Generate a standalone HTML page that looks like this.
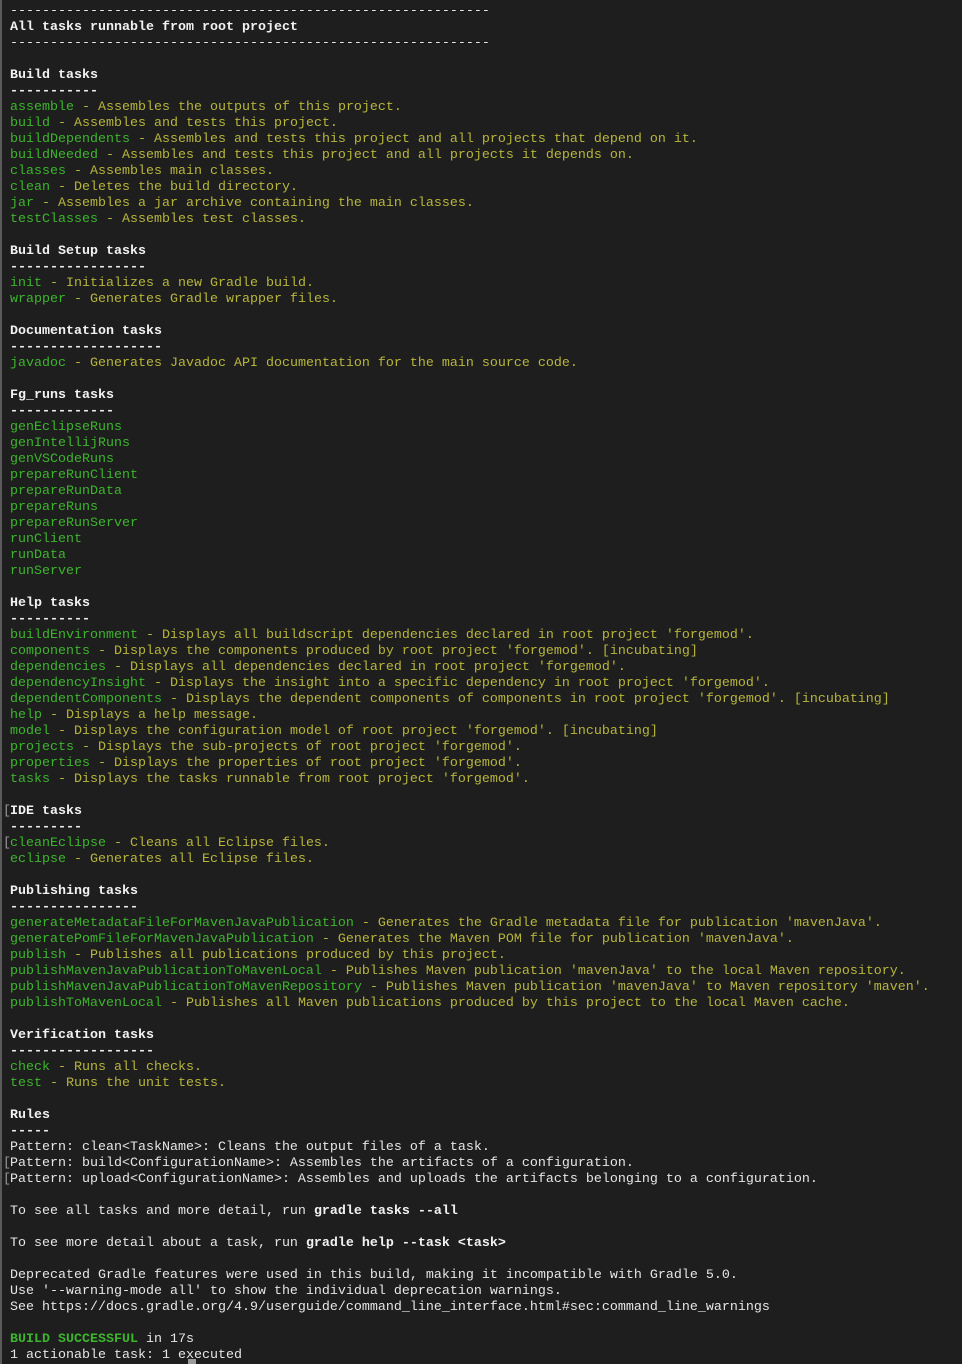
<!DOCTYPE html>
<html><head><meta charset="utf-8"><style>
html,body{margin:0;padding:0;background:#1e1e1e;width:962px;height:1364px;overflow:hidden;}
body{border-left:2px solid #5a5a5a;box-sizing:border-box;position:relative;}
pre{margin:0;padding:4px 0 0 8px;font-family:"Liberation Mono",monospace;font-size:13.33px;line-height:16px;color:#e6e6e6;white-space:pre;}
b{font-weight:bold;color:#f2f2f2}
.g{color:#3cb52c}
.y{color:#b7b53a}
.gb{color:#3cb52c;font-weight:bold}
.br{position:absolute;left:1px;color:#9a9a9a;font-family:"Liberation Mono",monospace;font-size:13.33px;line-height:16px}
.cur{position:absolute;left:186px;top:1359px;width:8px;height:5px;background:#9a9a9a}
</style></head><body>
<div class="br" style="top:804px">[</div>
<div class="br" style="top:836px">[</div>
<div class="br" style="top:1156px">[</div>
<div class="br" style="top:1172px">[</div>
<div class="cur"></div>
<pre>------------------------------------------------------------
<b>All tasks runnable from root project</b>
------------------------------------------------------------

<b>Build tasks</b>
<b>-----------</b>
<span class="g">assemble</span><span class="y"> - Assembles the outputs of this project.</span>
<span class="g">build</span><span class="y"> - Assembles and tests this project.</span>
<span class="g">buildDependents</span><span class="y"> - Assembles and tests this project and all projects that depend on it.</span>
<span class="g">buildNeeded</span><span class="y"> - Assembles and tests this project and all projects it depends on.</span>
<span class="g">classes</span><span class="y"> - Assembles main classes.</span>
<span class="g">clean</span><span class="y"> - Deletes the build directory.</span>
<span class="g">jar</span><span class="y"> - Assembles a jar archive containing the main classes.</span>
<span class="g">testClasses</span><span class="y"> - Assembles test classes.</span>

<b>Build Setup tasks</b>
<b>-----------------</b>
<span class="g">init</span><span class="y"> - Initializes a new Gradle build.</span>
<span class="g">wrapper</span><span class="y"> - Generates Gradle wrapper files.</span>

<b>Documentation tasks</b>
<b>-------------------</b>
<span class="g">javadoc</span><span class="y"> - Generates Javadoc API documentation for the main source code.</span>

<b>Fg_runs tasks</b>
<b>-------------</b>
<span class="g">genEclipseRuns
genIntellijRuns
genVSCodeRuns
prepareRunClient
prepareRunData
prepareRuns
prepareRunServer
runClient
runData
runServer</span>

<b>Help tasks</b>
<b>----------</b>
<span class="g">buildEnvironment</span><span class="y"> - Displays all buildscript dependencies declared in root project 'forgemod'.</span>
<span class="g">components</span><span class="y"> - Displays the components produced by root project 'forgemod'. [incubating]</span>
<span class="g">dependencies</span><span class="y"> - Displays all dependencies declared in root project 'forgemod'.</span>
<span class="g">dependencyInsight</span><span class="y"> - Displays the insight into a specific dependency in root project 'forgemod'.</span>
<span class="g">dependentComponents</span><span class="y"> - Displays the dependent components of components in root project 'forgemod'. [incubating]</span>
<span class="g">help</span><span class="y"> - Displays a help message.</span>
<span class="g">model</span><span class="y"> - Displays the configuration model of root project 'forgemod'. [incubating]</span>
<span class="g">projects</span><span class="y"> - Displays the sub-projects of root project 'forgemod'.</span>
<span class="g">properties</span><span class="y"> - Displays the properties of root project 'forgemod'.</span>
<span class="g">tasks</span><span class="y"> - Displays the tasks runnable from root project 'forgemod'.</span>

<b>IDE tasks</b>
<b>---------</b>
<span class="g">cleanEclipse</span><span class="y"> - Cleans all Eclipse files.</span>
<span class="g">eclipse</span><span class="y"> - Generates all Eclipse files.</span>

<b>Publishing tasks</b>
<b>----------------</b>
<span class="g">generateMetadataFileForMavenJavaPublication</span><span class="y"> - Generates the Gradle metadata file for publication 'mavenJava'.</span>
<span class="g">generatePomFileForMavenJavaPublication</span><span class="y"> - Generates the Maven POM file for publication 'mavenJava'.</span>
<span class="g">publish</span><span class="y"> - Publishes all publications produced by this project.</span>
<span class="g">publishMavenJavaPublicationToMavenLocal</span><span class="y"> - Publishes Maven publication 'mavenJava' to the local Maven repository.</span>
<span class="g">publishMavenJavaPublicationToMavenRepository</span><span class="y"> - Publishes Maven publication 'mavenJava' to Maven repository 'maven'.</span>
<span class="g">publishToMavenLocal</span><span class="y"> - Publishes all Maven publications produced by this project to the local Maven cache.</span>

<b>Verification tasks</b>
<b>------------------</b>
<span class="g">check</span><span class="y"> - Runs all checks.</span>
<span class="g">test</span><span class="y"> - Runs the unit tests.</span>

<b>Rules</b>
<b>-----</b>
Pattern: clean&lt;TaskName&gt;: Cleans the output files of a task.
Pattern: build&lt;ConfigurationName&gt;: Assembles the artifacts of a configuration.
Pattern: upload&lt;ConfigurationName&gt;: Assembles and uploads the artifacts belonging to a configuration.

To see all tasks and more detail, run <b>gradle tasks --all</b>

To see more detail about a task, run <b>gradle help --task &lt;task&gt;</b>

Deprecated Gradle features were used in this build, making it incompatible with Gradle 5.0.
Use '--warning-mode all' to show the individual deprecation warnings.
See https://docs.gradle.org/4.9/userguide/command_line_interface.html#sec:command_line_warnings

<span class="gb">BUILD SUCCESSFUL</span> in 17s
1 actionable task: 1 executed</pre>
</body></html>
